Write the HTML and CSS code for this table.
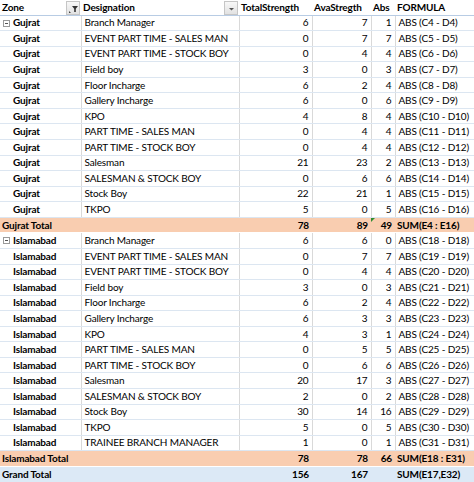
FILE: index.html
```html
<!DOCTYPE html>
<html>
<head>
<meta charset="utf-8">
<link rel="stylesheet" href="styles.css">
</head>
<body>
<table class="pivot">
  <colgroup>
    <col class="c-zone"><col class="c-desig"><col class="c-total"><col class="c-ava"><col class="c-abs"><col class="c-formula">
  </colgroup>
  <thead>
    <tr class="head">
      <th class="hz"><span class="hlabel">Zone</span><span class="fbtn"><svg width="11" height="11" viewBox="0 0 11 11"><path d="M1 8 L3 10 L1 10 Z" fill="#444"/><path d="M4 3 H10 L7.8 5.8 V9 H6.2 V5.8 Z" fill="#333"/></svg></span></th>
      <th class="hd"><span class="hlabel">Designation</span><span class="fbtn"><svg width="11" height="11" viewBox="0 0 11 11"><path d="M3 5 H8 L5.5 7.5 Z" fill="#555"/></svg></span></th>
      <th class="num">TotalStrength</th>
      <th class="num">AvaStregth</th>
      <th class="num">Abs</th>
      <th class="txt">FORMULA</th>
    </tr>
  </thead>
  <tbody>
    <tr><td class="zone first"><span class="coll"></span>Gujrat</td><td>Branch Manager</td><td class="num">6</td><td class="num">7</td><td class="num">1</td><td>ABS (C4 - D4)</td></tr>
    <tr><td class="zone">Gujrat</td><td>EVENT PART TIME - SALES MAN</td><td class="num">0</td><td class="num">7</td><td class="num">7</td><td>ABS (C5 - D5)</td></tr>
    <tr><td class="zone">Gujrat</td><td>EVENT PART TIME - STOCK BOY</td><td class="num">0</td><td class="num">4</td><td class="num">4</td><td>ABS (C6 - D6)</td></tr>
    <tr><td class="zone">Gujrat</td><td>Field boy</td><td class="num">3</td><td class="num">0</td><td class="num">3</td><td>ABS (C7 - D7)</td></tr>
    <tr><td class="zone">Gujrat</td><td>Floor Incharge</td><td class="num">6</td><td class="num">2</td><td class="num">4</td><td>ABS (C8 - D8)</td></tr>
    <tr><td class="zone">Gujrat</td><td>Gallery Incharge</td><td class="num">6</td><td class="num">0</td><td class="num">6</td><td>ABS (C9 - D9)</td></tr>
    <tr><td class="zone">Gujrat</td><td>KPO</td><td class="num">4</td><td class="num">8</td><td class="num">4</td><td>ABS (C10 - D10)</td></tr>
    <tr><td class="zone">Gujrat</td><td>PART TIME - SALES MAN</td><td class="num">0</td><td class="num">4</td><td class="num">4</td><td>ABS (C11 - D11)</td></tr>
    <tr><td class="zone">Gujrat</td><td>PART TIME - STOCK BOY</td><td class="num">0</td><td class="num">4</td><td class="num">4</td><td>ABS (C12 - D12)</td></tr>
    <tr><td class="zone">Gujrat</td><td>Salesman</td><td class="num">21</td><td class="num">23</td><td class="num">2</td><td>ABS (C13 - D13)</td></tr>
    <tr><td class="zone">Gujrat</td><td>SALESMAN &amp; STOCK BOY</td><td class="num">0</td><td class="num">6</td><td class="num">6</td><td>ABS (C14 - D14)</td></tr>
    <tr><td class="zone">Gujrat</td><td>Stock Boy</td><td class="num">22</td><td class="num">21</td><td class="num">1</td><td>ABS (C15 - D15)</td></tr>
    <tr><td class="zone">Gujrat</td><td>TKPO</td><td class="num">5</td><td class="num">0</td><td class="num">5</td><td>ABS (C16 - D16)</td></tr>
    <tr class="subtotal"><td colspan="2">Gujrat Total</td><td class="num">78</td><td class="num">89</td><td class="num flag">49</td><td>SUM(E4 : E16)</td></tr>
    <tr><td class="zone first"><span class="coll"></span>Islamabad</td><td>Branch Manager</td><td class="num">6</td><td class="num">6</td><td class="num">0</td><td>ABS (C18 - D18)</td></tr>
    <tr><td class="zone">Islamabad</td><td>EVENT PART TIME - SALES MAN</td><td class="num">0</td><td class="num">7</td><td class="num">7</td><td>ABS (C19 - D19)</td></tr>
    <tr><td class="zone">Islamabad</td><td>EVENT PART TIME - STOCK BOY</td><td class="num">0</td><td class="num">4</td><td class="num">4</td><td>ABS (C20 - D20)</td></tr>
    <tr><td class="zone">Islamabad</td><td>Field boy</td><td class="num">3</td><td class="num">0</td><td class="num">3</td><td>ABS (C21 - D21)</td></tr>
    <tr><td class="zone">Islamabad</td><td>Floor Incharge</td><td class="num">6</td><td class="num">2</td><td class="num">4</td><td>ABS (C22 - D22)</td></tr>
    <tr><td class="zone">Islamabad</td><td>Gallery Incharge</td><td class="num">6</td><td class="num">3</td><td class="num">3</td><td>ABS (C23 - D23)</td></tr>
    <tr><td class="zone">Islamabad</td><td>KPO</td><td class="num">4</td><td class="num">3</td><td class="num">1</td><td>ABS (C24 - D24)</td></tr>
    <tr><td class="zone">Islamabad</td><td>PART TIME - SALES MAN</td><td class="num">0</td><td class="num">5</td><td class="num">5</td><td>ABS (C25 - D25)</td></tr>
    <tr><td class="zone">Islamabad</td><td>PART TIME - STOCK BOY</td><td class="num">0</td><td class="num">6</td><td class="num">6</td><td>ABS (C26 - D26)</td></tr>
    <tr><td class="zone">Islamabad</td><td>Salesman</td><td class="num">20</td><td class="num">17</td><td class="num">3</td><td>ABS (C27 - D27)</td></tr>
    <tr><td class="zone">Islamabad</td><td>SALESMAN &amp; STOCK BOY</td><td class="num">2</td><td class="num">0</td><td class="num">2</td><td>ABS (C28 - D28)</td></tr>
    <tr><td class="zone">Islamabad</td><td>Stock Boy</td><td class="num">30</td><td class="num">14</td><td class="num">16</td><td>ABS (C29 - D29)</td></tr>
    <tr><td class="zone">Islamabad</td><td>TKPO</td><td class="num">5</td><td class="num">0</td><td class="num">5</td><td>ABS (C30 - D30)</td></tr>
    <tr><td class="zone">Islamabad</td><td>TRAINEE BRANCH MANAGER</td><td class="num">1</td><td class="num">0</td><td class="num">1</td><td>ABS (C31 - D31)</td></tr>
    <tr class="subtotal"><td colspan="2">Islamabad Total</td><td class="num">78</td><td class="num">78</td><td class="num">66</td><td>SUM(E18 : E31)</td></tr>
    <tr class="grand"><td colspan="2">Grand Total</td><td class="num">156</td><td class="num">167</td><td class="num"></td><td>SUM(E17,E32)</td></tr>
  </tbody>
</table>
</body>
</html>
```

FILE: styles.css
```css
html, body {
  margin: 0;
  padding: 0;
  background: #ffffff;
}

.pivot {
  border-collapse: collapse;
  table-layout: fixed;
  width: 474px;
  height: 482px;
  font-family: Lato, "Liberation Sans", sans-serif;
  font-size: 10px;
  letter-spacing: -0.15px;
  color: #000;
}

.c-zone { width: 81px; }
.c-desig { width: 158px; }
.c-total { width: 73px; }
.c-ava { width: 59px; }
.c-abs { width: 24px; }
.c-formula { width: 79px; }

.pivot tr { height: 15px; }

.pivot th,
.pivot td {
  padding: 0 3px 0 3px;
  white-space: nowrap;
  overflow: hidden;
  line-height: 13px;
  vertical-align: middle;
}

.pivot th {
  font-weight: bold;
  text-align: left;
  border-bottom: 1px solid #b8cce4;
}

.head th { padding-left: 2px; }

.hz, .hd {
  position: relative;
}

.fbtn {
  position: absolute;
  right: 1px;
  top: 1px;
  width: 12px;
  height: 12px;
  border: 1px solid #c6c6c6;
  background: linear-gradient(#f8f8f8, #e2e2e2);
  display: flex;
  align-items: center;
  justify-content: center;
}

.pivot td {
  border-bottom: 1px solid #dce6f1;
  border-left: 1px solid #d9d9d9;
}

.pivot td:first-child { border-left: none; }

.num { text-align: right; }
.pivot th.num { text-align: left; }

.zone {
  font-weight: bold;
  padding-left: 13px !important;
}

.zone.first { position: relative; }

.coll {
  position: absolute;
  left: 3px;
  top: 4px;
  width: 7px;
  height: 7px;
  border: 1px solid #9a9a9a;
  background: #fff;
  box-sizing: border-box;
}
.coll::after {
  content: "";
  position: absolute;
  left: 1px;
  right: 1px;
  top: 2px;
  height: 1px;
  background: #555;
}

.subtotal td {
  background: #f9cdb0;
  font-weight: bold;
  border-left: none;
  border-top: 1px solid #a9c4e4;
  border-bottom: 1px solid #ffffff;
  padding-left: 2px;
}

.subtotal td.num,
.grand td.num { padding-right: 3px; }

.flag { position: relative; }
.flag::before {
  content: "";
  position: absolute;
  left: 0;
  top: 0;
  border-top: 4px solid #2e8b30;
  border-right: 4px solid transparent;
}

.grand td {
  background: #dce9f6;
  font-weight: bold;
  border-left: none;
  border-top: 1px solid #b8cce4;
  border-bottom: none;
  padding-left: 2px;
}
```
